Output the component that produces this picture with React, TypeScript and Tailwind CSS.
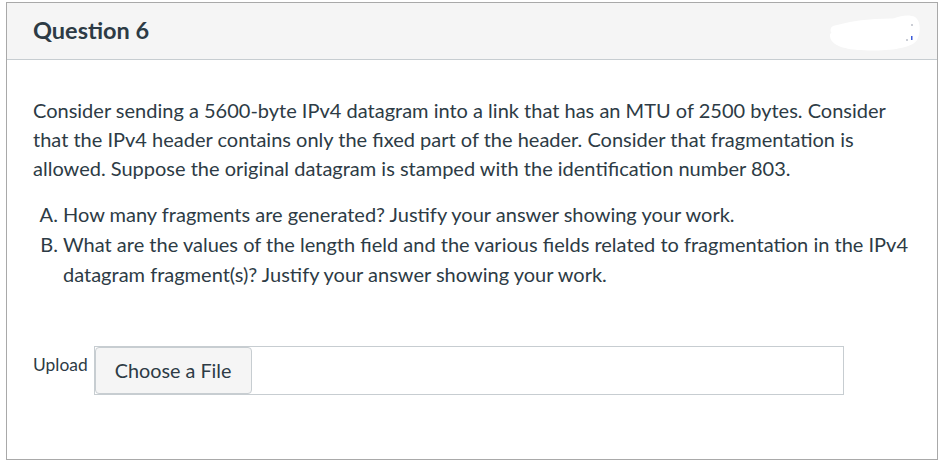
export default function App() {
  return (
    <div className="w-[951px] h-[475px] bg-white pt-[2px] pl-[6px] font-['Lato',_'Liberation_Sans',_sans-serif] text-[#2d3b45]">
      <div className="w-[932px] h-[458px] border border-[#a9a9a9] flex flex-col">
        {/* Header */}
        <div className="h-[57px] shrink-0 bg-[#f5f5f5] border-b border-[#c7cdd1] flex items-center justify-between pl-[26px] pr-[16px]">
          <h2 className="text-[23.5px] font-bold leading-none mt-[-1px]">Question 6</h2>
          <svg width="94" height="40" viewBox="0 0 94 40" className="mt-[1px]">
            <path d="M3 22 C 10 15, 40 14, 58 13 C 64 5, 80 1, 88 5 C 95 10, 93 22, 90 28 C 86 36, 60 40, 34 38 C 14 37, 2 32, 3 22 Z" fill="#fff" />
            <path d="M8 18 C 30 12, 60 10, 86 12" stroke="#fff" strokeWidth="9" fill="none" strokeLinecap="round" />
            <rect x="84" y="24" width="1.5" height="4" fill="#3b5bd9" />
            <circle cx="80" cy="28" r="0.8" fill="#8a8fa0" />
            <circle cx="85" cy="13" r="0.8" fill="#8a8fa0" />
          </svg>
        </div>

        {/* Body */}
        <div className="pl-[26px] pr-[24px] pt-[36px]">
          <p className="text-[20px] leading-[29px]">
            Consider sending a 5600-byte IPv4 datagram into a link that has an MTU of 2500 bytes. Consider that the IPv4 header contains only the fixed part of the header. Consider that fragmentation is allowed. Suppose the original datagram is stamped with the identification number 803.
          </p>
          <ol className="mt-[16px] list-[upper-alpha] pl-[30px] text-[20px] leading-[30px]">
            <li>How many fragments are generated? Justify your answer showing your work.</li>
            <li>What are the values of the length field and the various fields related to fragmentation in the IPv4 datagram fragment(s)? Justify your answer showing your work.</li>
          </ol>

          <div className="mt-[57px] flex items-start gap-[6px]">
            <span className="text-[17.4px] leading-[20px] mt-[9px]">Upload</span>
            <div className="w-[750px] h-[49px] border border-[#c7cdd1] bg-white flex">
              <button className="w-[157px] h-[47px] bg-[#f5f5f5] border border-[#c7cdd1] rounded-[4px] text-[19.8px] text-[#2d3b45]">
                Choose a File
              </button>
            </div>
          </div>
        </div>
      </div>
    </div>
  )
}
